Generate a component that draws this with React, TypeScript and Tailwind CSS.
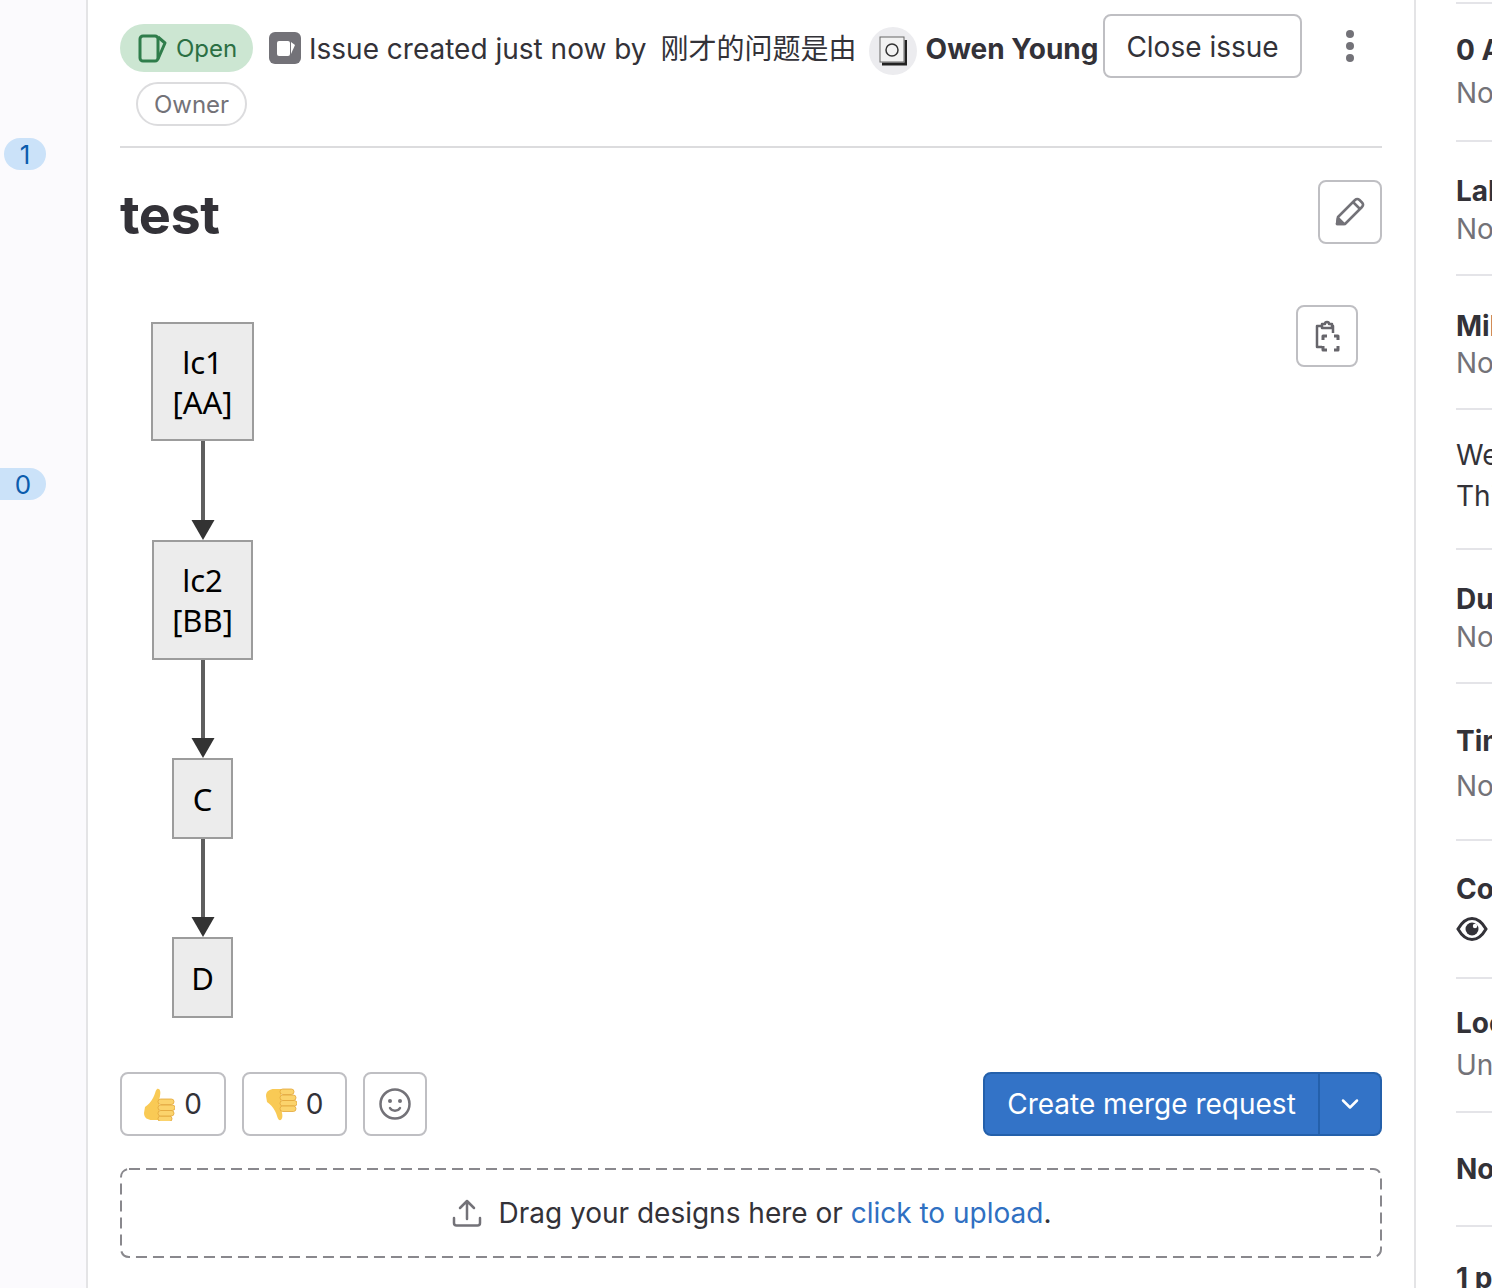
const FONT = "font-['Inter','Noto_Sans_CJK_SC',sans-serif]";

function OpenIcon() {
  return (
    <svg width="30" height="30" viewBox="0 0 30 30" fill="none" stroke="#2f7d4b" strokeWidth="3" strokeLinejoin="round">
      <rect x="3" y="3" width="18" height="25" rx="3" />
      <path d="M21 4l7 6-7 16" />
    </svg>
  );
}

function IssueIcon() {
  return (
    <svg width="32" height="32" viewBox="0 0 32 32">
      <rect width="32" height="32" rx="6" fill="#737278" />
      <rect x="8" y="9" width="13" height="15" rx="2" fill="#fff" />
      <path d="M22 10l4 3-4 9z" fill="#fff" />
    </svg>
  );
}

function Avatar() {
  return (
    <div className="w-12 h-12 rounded-full bg-[#ececef] flex items-center justify-center shrink-0">
      <svg width="28" height="30" viewBox="0 0 28 30" fill="none">
        <path d="M3 28h24V4" stroke="#222" strokeWidth="3" />
        <rect x="1" y="1" width="24" height="25" fill="#f2f2f2" stroke="#666" />
        <circle cx="13" cy="14" r="6" stroke="#333" strokeWidth="1.5" />
      </svg>
    </div>
  );
}

function Kebab() {
  return (
    <svg width="16" height="36" viewBox="0 0 16 36" fill="#737278">
      <circle cx="8" cy="6" r="4" />
      <circle cx="8" cy="18" r="4" />
      <circle cx="8" cy="30" r="4" />
    </svg>
  );
}

function PencilIcon() {
  return (
    <svg width="32" height="32" viewBox="0 0 32 32" fill="none" stroke="#737278" strokeWidth="2.5" strokeLinejoin="round">
      <path d="M3 28l1-7L21 4c1.500-1.500 3-1.500 4.500 0l2.500 2.500c1.500 1.500 1.500 3 0 4.500L11 28z" />
      <path d="M19 6l7 7" />
      <path d="M3 28l1-6 6 6z" fill="#737278" />
    </svg>
  );
}

function ClipboardIcon() {
  return (
    <svg width="26" height="32" viewBox="0 0 26 32" fill="none" stroke="#66656b" strokeWidth="2.500" strokeLinejoin="round">
      <path d="M8 27H3V6h16v7" />
      <path d="M8 8V4h3a2 2 0 014 0h3v4z" fill="#fff" />
      <path d="M9 20v-4h4M20 16h4v4M24 26v4h-4M13 30H9v-4" strokeWidth="3" />
    </svg>
  );
}

function Fingers({ flip }: { flip?: boolean }) {
  const ys = flip ? [1, 7, 12.500, 18] : [28, 22.500, 17, 11];
  const ws = [14, 16, 17, 16];
  return (
    <>
      {ys.map((y, i) => (
        <rect key={y} x="14" y={y} width={ws[i]} height="5.500" rx="2.700" fill="#fbd36c" stroke="#e2a63a" strokeWidth="0.800" />
      ))}
    </>
  );
}

function ThumbUp() {
  return (
    <svg width="31" height="33" viewBox="0 0 31 33">
      <path d="M1 19c3-2 6-5 8-9 2-3 2-7 4-9 3-1 4 3 3 7l-1 5v19H8c-4 0-8-2-8-7z" fill="#f9ca55" />
      <Fingers />
    </svg>
  );
}

function ThumbDown() {
  return (
    <svg width="31" height="33" viewBox="0 0 31 33">
      <path d="M1 14c3 2 6 5 8 9 2 3 2 7 4 9 3 1 4-3 3-7l-1-5V1H8C4 1 0 3 0 8z" fill="#f9ca55" />
      <Fingers flip />
    </svg>
  );
}

function SmileIcon() {
  return (
    <svg width="32" height="32" viewBox="0 0 32 32" fill="none" stroke="#737278" strokeWidth="2.500">
      <circle cx="16" cy="16" r="14.500" />
      <circle cx="11" cy="13" r="2" fill="#737278" stroke="none" />
      <circle cx="21" cy="13" r="2" fill="#737278" stroke="none" />
      <path d="M11 20c2 3.500 8 3.500 10 0" strokeLinecap="round" />
    </svg>
  );
}

function UploadIcon() {
  return (
    <svg width="30" height="28" viewBox="0 0 30 28" fill="none" stroke="#737278" strokeWidth="2.500" strokeLinecap="round" strokeLinejoin="round">
      <path d="M15 20V2M8 9l7-7 7 7" />
      <path d="M2 19v5a2.500 2.500 0 002.500 2.500h21A2.500 2.500 0 0028 24v-5" />
    </svg>
  );
}

function EyeIcon() {
  return (
    <svg width="32" height="26" viewBox="0 0 32 26" fill="none">
      <path d="M2 13C6 6 10 2.500 16 2.500S26 6 30 13c-4 7-8 10.500-14 10.500S6 20 2 13z" stroke="#333238" strokeWidth="3" />
      <circle cx="16" cy="13" r="6.500" fill="#333238" />
      <circle cx="19" cy="10" r="2.200" fill="#fff" />
    </svg>
  );
}

function Arrow({ h }: { h: number }) {
  return (
    <svg width="25" height={h} viewBox={`0 0 25 ${h}`} className="block">
      <rect x="11" y="0" width="4" height={h - 18} fill="#5f5f5f" />
      <path d={`M1.500 ${h - 20}H24.500L13 ${h}z`} fill="#333" />
    </svg>
  );
}

function Node({ className, lines }: { className: string; lines: string[] }) {
  return (
    <div className={`flex flex-col items-center justify-center border-2 border-[#9c9c9c] bg-[#ececec] font-['Noto_Sans',sans-serif] text-[31px] leading-[40px] text-black ${className}`}>
      {lines.map((l) => (
        <div key={l}>{l}</div>
      ))}
    </div>
  );
}

const SIDEBAR = [
  { cls: "h-[138px] pt-[26px]", gap: "mt-[3px]", title: "0 Assignees", value: "None" },
  { cls: "h-[134px] pt-[29px]", gap: "mt-[-2px]", title: "Labels", value: "None" },
  { cls: "h-[134px] pt-[30px]", gap: "mt-[-3px]", title: "Milestone", value: "None" },
  { cls: "h-[140px] pt-[25px]", gap: "mt-[1px]", title: "Weight", value: "This feature is locked", plain: true },
  { cls: "h-[134px] pt-[29px]", gap: "mt-[-2px]", title: "Due date", value: "None" },
  { cls: "h-[157px] pt-[37px]", gap: "mt-[5px]", title: "Time tracking", value: "No estimate" },
  { cls: "h-[138px] pt-[28px]", gap: "mt-0", title: "Confidentiality", eye: true, value: "Not confidential" },
  { cls: "h-[134px] pt-[24px]", gap: "mt-[2px]", title: "Lock issue", value: "Unlocked" },
  { cls: "h-[114px] pt-[36px]", gap: "", title: "Notifications" },
];

export default function App() {
  return (
    <div className={`flex h-screen w-full overflow-hidden bg-white text-[28px] text-[#333238] ${FONT}`}>
      <aside className="w-[88px] shrink-0 border-r-2 border-[#e4e4e6] bg-[#fbfafd] pt-[138px]">
        <div className="flex w-[46px] flex-col items-end gap-[298px] text-[#0b5cad] text-[26px] leading-[32px]">
          <div className="flex h-8 w-[42px] items-center justify-center rounded-full bg-[#cbe2f9] pt-[1px]">1</div>
          <div className="flex h-8 w-[46px] items-center justify-center rounded-r-full bg-[#cbe2f9] pt-[1px]">0</div>
        </div>
      </aside>

      <main className="w-[1328px] shrink-0 border-r-2 border-[#e4e4e6] px-8">
        <header className="flex h-[148px] items-start border-b-2 border-[#dcdcde] pt-[14px]">
          <div className="flex-1 pt-[10px]">
            <div className="flex h-12 items-center whitespace-nowrap">
              <span className="flex h-12 w-[133px] items-center gap-[9px] rounded-full bg-[#cce6d2] pl-[17px] text-[24px] text-[#2b6f43]">
                <OpenIcon />
                <span className="pt-[2px]">Open</span>
              </span>
              <span className="ml-4"><IssueIcon /></span>
              <span className="ml-2 pt-[2px]">Issue created just now by</span>
              <span className="ml-[14px] pt-[2px]">刚才的问题是由</span>
              <span className="ml-3 mt-[6px]"><Avatar /></span>
              <span className="ml-[9px] pt-[2px] font-bold">Owen Young</span>
            </div>
            <span className="ml-4 mt-[10px] inline-flex h-[44px] w-[111px] items-center justify-center rounded-full border-2 border-[#dcdcde] pt-[2px] text-[24px] text-[#737278]">
              Owner
            </span>
          </div>
          <button className="flex h-16 w-[199px] items-center justify-center rounded-lg border-2 border-[#bfbfc3] pt-[2px]">
            Close issue
          </button>
          <div className="flex h-16 w-20 items-center justify-end pr-[24px]">
            <Kebab />
          </div>
        </header>

        <div className="flex items-start justify-between pt-8">
          <h1 className="text-[54px] font-bold leading-[70px] tracking-[-0.5px]">test</h1>
          <button className="flex h-16 w-16 items-center justify-center rounded-lg border-2 border-[#bfbfc3]">
            <PencilIcon />
          </button>
        </div>

        <section className="relative pt-[72px]">
          <button className="absolute right-6 top-[55px] flex h-[62px] w-[62px] items-center justify-center rounded-lg border-2 border-[#bfbfc3]">
            <ClipboardIcon />
          </button>
          <div className="flex w-[165px] flex-col items-center">
            <Node className="h-[119px] w-[103px]" lines={["lc1", "[AA]"]} />
            <Arrow h={99} />
            <Node className="h-[120px] w-[101px]" lines={["lc2", "[BB]"]} />
            <Arrow h={98} />
            <Node className="h-[81px] w-[61px]" lines={["C"]} />
            <Arrow h={98} />
            <Node className="h-[81px] w-[61px]" lines={["D"]} />
          </div>
        </section>

        <div className="mt-[54px] flex items-center justify-between">
          <div className="flex gap-4">
            <button className="flex h-16 w-[106px] items-center justify-center gap-[9px] rounded-lg border-2 border-[#bfbfc3]">
              <ThumbUp />0
            </button>
            <button className="flex h-16 w-[105px] items-center justify-center gap-[9px] rounded-lg border-2 border-[#bfbfc3]">
              <ThumbDown />0
            </button>
            <button className="flex h-16 w-16 items-center justify-center rounded-lg border-2 border-[#bfbfc3]">
              <SmileIcon />
            </button>
          </div>
          <div className="flex h-16 text-white">
            <button className="h-16 w-[337px] rounded-l-lg border-2 border-[#2460ab] bg-[#3373c7]">Create merge request</button>
            <button className="flex h-16 w-[62px] items-center justify-center rounded-r-lg border-y-2 border-r-2 border-[#2460ab] bg-[#3373c7]">
              <svg width="18" height="12" viewBox="0 0 18 12" fill="none" stroke="#fff" strokeWidth="2.500" strokeLinecap="round" strokeLinejoin="round">
                <path d="M2 2.500l7 7 7-7" />
              </svg>
            </button>
          </div>
        </div>

        <div className="relative mt-8 flex h-[90px] items-center justify-center gap-[16px] pl-[2px]">
          <svg className="absolute inset-0" width="1262" height="90" viewBox="0 0 1262 90" fill="none">
            <rect x="1" y="1" width="1260" height="88" rx="8" stroke="#89888d" strokeWidth="2" strokeDasharray="11 6" />
          </svg>
          <UploadIcon />
          <span>
            Drag your designs here or <span className="text-[#2f70c2]">click to upload</span>.
          </span>
        </div>
      </main>

      <aside className="min-w-0 flex-1 overflow-hidden pl-10 whitespace-nowrap">
        <div className="mt-[2px] w-[400px] border-t-2 border-[#e4e4e8]">
          {SIDEBAR.map((s) => (
            <div key={s.title} className={`border-b-2 border-[#e4e4e8] leading-[40px] ${s.cls}`}>
              <div className={s.plain ? "" : "font-bold"}>{s.title}</div>
              {s.eye ? (
                <div className="flex items-center gap-3 h-10"><EyeIcon /> {s.value}</div>
              ) : s.value ? (
                <div className={`${s.gap} ${s.plain ? "" : "text-[#737278]"}`}>{s.value}</div>
              ) : null}
            </div>
          ))}
          <div className="pt-[31px] font-bold leading-[40px]">1 participant</div>
        </div>
      </aside>
    </div>
  );
}
